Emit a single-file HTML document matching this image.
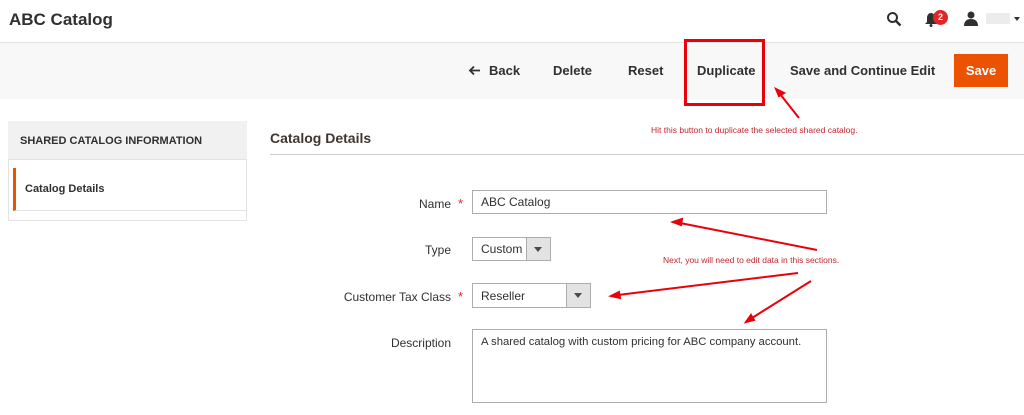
<!DOCTYPE html>
<html><head><style>
*{box-sizing:border-box;margin:0;padding:0}
body{width:1024px;height:415px;overflow:hidden;background:#fff;font-family:"Liberation Sans",sans-serif;color:#303030;position:relative}
.a{position:absolute}
.lbl{font-size:12px;color:#303030;text-align:right;width:200px}
.in{border:1px solid #adadad;background:#fff;font-size:12px;padding:0 8px;display:flex;align-items:center}
.star{color:#e22626;font-size:13px}
.btn{font-size:13px;font-weight:bold;color:#303030}
</style></head><body>
<div class="a" style="left:9px;top:10px;font-size:17px;font-weight:bold;color:#303030">ABC Catalog</div>
<svg class="a" style="left:886px;top:11px" width="16" height="16" viewBox="0 0 16 16"><circle cx="6.5" cy="6.5" r="4.5" fill="none" stroke="#303030" stroke-width="2"/><path d="M10 10l4.5 4.5" stroke="#303030" stroke-width="2.4"/></svg>
<svg class="a" style="left:924px;top:12px" width="14" height="15" viewBox="0 0 14 15"><path d="M7 1C4 1 3 4 3 6v4L1 12h12l-2-2V6c0-2-1-5-4-5z" fill="#303030"/><circle cx="7" cy="13.5" r="1.5" fill="#303030"/></svg>
<div class="a" style="left:933px;top:10px;width:15px;height:15px;border-radius:50%;background:#e22626;color:#fff;font-size:9px;font-weight:bold;text-align:center;line-height:15px">2</div>
<svg class="a" style="left:964px;top:11px" width="14" height="15" viewBox="0 0 14 15"><circle cx="7" cy="4" r="3.5" fill="#303030"/><path d="M0 15c0-5 3-7 7-7s7 2 7 7z" fill="#303030"/></svg>
<div class="a" style="left:986px;top:13px;width:24px;height:11px;background:#ececec"></div>
<div class="a" style="left:1014px;top:17px;border:3px solid transparent;border-top:4px solid #303030"></div>
<div class="a" style="left:0;top:42px;width:1024px;height:57px;background:#f8f8f8;border-top:1px solid #e3e3e3"></div>
<svg class="a" style="left:468px;top:65px" width="13" height="11" viewBox="0 0 13 11"><path d="M12 5.5H2M6 1.5L2 5.5l4 4" fill="none" stroke="#303030" stroke-width="1.8"/></svg>
<div class="a btn" style="left:489px;top:63px">Back</div>
<div class="a btn" style="left:553px;top:63px">Delete</div>
<div class="a btn" style="left:628px;top:63px">Reset</div>
<div class="a btn" style="left:697px;top:63px">Duplicate</div>
<div class="a btn" style="left:790px;top:63px">Save and Continue Edit</div>
<div class="a" style="left:954px;top:54px;width:54px;height:33px;background:#eb5202;color:#fff;font-size:13px;font-weight:bold;text-align:center;line-height:33px">Save</div>
<div class="a" style="left:684px;top:39px;width:81px;height:67px;border:3px solid #e8000b"></div>
<svg class="a" style="left:0;top:0" width="1024" height="415"><g stroke="#e8000b" stroke-width="2" fill="#e8000b">
<line x1="799" y1="118" x2="780" y2="94"/><path d="M776 89l8 4-5 3z"/>
<line x1="817" y1="250" x2="680" y2="223"/><path d="M673 222l9-3-1 6z"/>
<line x1="798" y1="273" x2="618" y2="295"/><path d="M611 296l8-4 1 6z"/>
<line x1="811" y1="281" x2="752" y2="318"/><path d="M746 322l5-7 3 5z"/></g></svg>
<div class="a" style="left:651px;top:125px;font-size:8.5px;color:#c4252c;white-space:nowrap">Hit this button to duplicate the selected shared catalog.</div>
<div class="a" style="left:663px;top:255px;font-size:8.5px;color:#c4252c;white-space:nowrap">Next, you will need to edit data in this sections.</div>
<div class="a" style="left:8px;top:121px;width:239px;height:100px;border:1px solid #e3e3e3;background:#fff"></div>
<div class="a" style="left:8px;top:121px;width:239px;height:39px;background:#f1f1f1;border-bottom:1px solid #e3e3e3;font-size:11px;font-weight:bold;padding:14px 0 0 12px;color:#303030">SHARED CATALOG INFORMATION</div>
<div class="a" style="left:13px;top:168px;width:234px;height:43px;border-left:3px solid #eb5202;font-size:11px;font-weight:bold;padding:15px 0 0 9px;border-bottom:1px solid #e3e3e3">Catalog Details</div>
<div class="a" style="left:270px;top:130px;font-size:14px;font-weight:bold;color:#41362f">Catalog Details</div>
<div class="a" style="left:270px;top:154px;width:754px;height:1px;background:#ccc"></div>
<div class="a lbl" style="left:251px;top:197px">Name</div><div class="a star" style="left:458px;top:196px">*</div>
<div class="a in" style="left:472px;top:190px;width:355px;height:24px">ABC Catalog</div>
<div class="a lbl" style="left:251px;top:243px">Type</div>
<div class="a in" style="left:472px;top:237px;width:79px;height:24px">Custom</div>
<div class="a" style="left:526px;top:238px;width:24px;height:22px;background:#e3e3e3;border-left:1px solid #adadad"></div>
<div class="a" style="left:534px;top:247px;border:4px solid transparent;border-top:5px solid #514943"></div>
<div class="a lbl" style="left:251px;top:290px">Customer Tax Class</div><div class="a star" style="left:458px;top:289px">*</div>
<div class="a in" style="left:472px;top:283px;width:119px;height:25px">Reseller</div>
<div class="a" style="left:566px;top:284px;width:24px;height:23px;background:#e3e3e3;border-left:1px solid #adadad"></div>
<div class="a" style="left:574px;top:293px;border:4px solid transparent;border-top:5px solid #514943"></div>
<div class="a lbl" style="left:251px;top:336px">Description</div>
<div class="a" style="left:472px;top:329px;width:355px;height:74px;border:1px solid #adadad;font-size:11.3px;padding:6px 8px;white-space:nowrap">A shared catalog with custom pricing for ABC company account.</div>
</body></html>
